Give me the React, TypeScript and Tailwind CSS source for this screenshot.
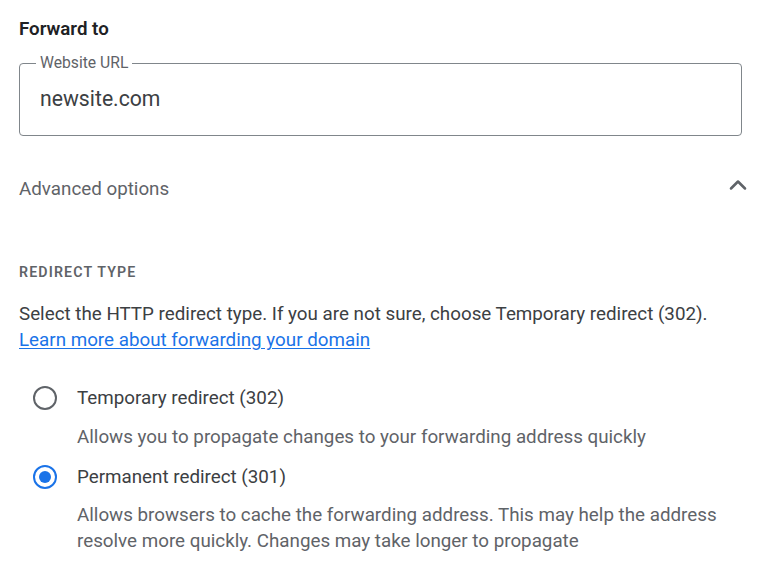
import { ChevronUp } from "lucide-react";

const font = { fontFamily: "Roboto, 'Liberation Sans', Arial, sans-serif" };

function Radio({ checked }: { checked?: boolean }) {
  return (
    <span
      className={`flex h-[24px] w-[24px] shrink-0 items-center justify-center rounded-full border-[2.5px] ${
        checked ? "border-[#1a73e8]" : "border-[#5f6368]"
      }`}
    >
      {checked && <span className="h-[12px] w-[12px] rounded-full bg-[#1a73e8]" />}
    </span>
  );
}

export default function App() {
  return (
    <div className="min-h-screen bg-white pl-[19px] pr-[26px] text-[#3c4043]" style={font}>
      {/* Forward to */}
      <h2 className="pt-[17px] text-[18.7px] leading-[24px] font-semibold text-[#202124]">Forward to</h2>

      <fieldset className="mt-[13px] h-[82px] rounded-[4px] border border-[#80868b] px-[16px]">
        <legend className="px-[4px] text-[15.7px] leading-[18px] text-[#5f6368]">Website URL</legend>
        <div className="pl-[4px] pt-[14px] text-[21.2px] leading-[26px] text-[#3c4043]">newsite.com</div>
      </fieldset>

      {/* Advanced options */}
      <div className="mt-[39px] flex items-center justify-between">
        <span className="text-[18.8px] leading-[24px] text-[#5f6368]">Advanced options</span>
        <ChevronUp className="mr-[-10px] h-[28px] w-[28px] -translate-y-[4px] text-[#5f6368]" strokeWidth={2.2} />
      </div>

      {/* Redirect type */}
      <div className="mt-[59px] text-[14.2px] leading-[20px] font-semibold tracking-[0.08em] text-[#5f6368]">
        REDIRECT TYPE
      </div>

      <p className="mt-[19px] text-[18.8px] leading-[26px]">
        Select the HTTP redirect type. If you are not sure, choose Temporary redirect (302).
        <br />
        <a href="#" className="text-[#1a73e8] underline underline-offset-2">
          Learn more about forwarding your domain
        </a>
      </p>

      <div className="mt-[32px] flex flex-col">
        <label className="flex items-center">
          <span className="flex w-[58px] pl-[14px]">
            <Radio />
          </span>
          <span className="text-[18.8px] leading-[26px]">Temporary redirect (302)</span>
        </label>
        <div className="mt-[13px] pl-[58px] text-[18.8px] leading-[26px] text-[#5f6368]">
          Allows you to propagate changes to your forwarding address quickly
        </div>

        <label className="mt-[14px] flex items-center">
          <span className="flex w-[58px] pl-[14px]">
            <Radio checked />
          </span>
          <span className="text-[18.8px] leading-[26px]">Permanent redirect (301)</span>
        </label>
        <div className="mt-[12px] pl-[58px] text-[18.8px] leading-[26px] text-[#5f6368]">
          Allows browsers to cache the forwarding address. This may help the address
          <br />
          resolve more quickly. Changes may take longer to propagate
        </div>
      </div>
    </div>
  );
}
